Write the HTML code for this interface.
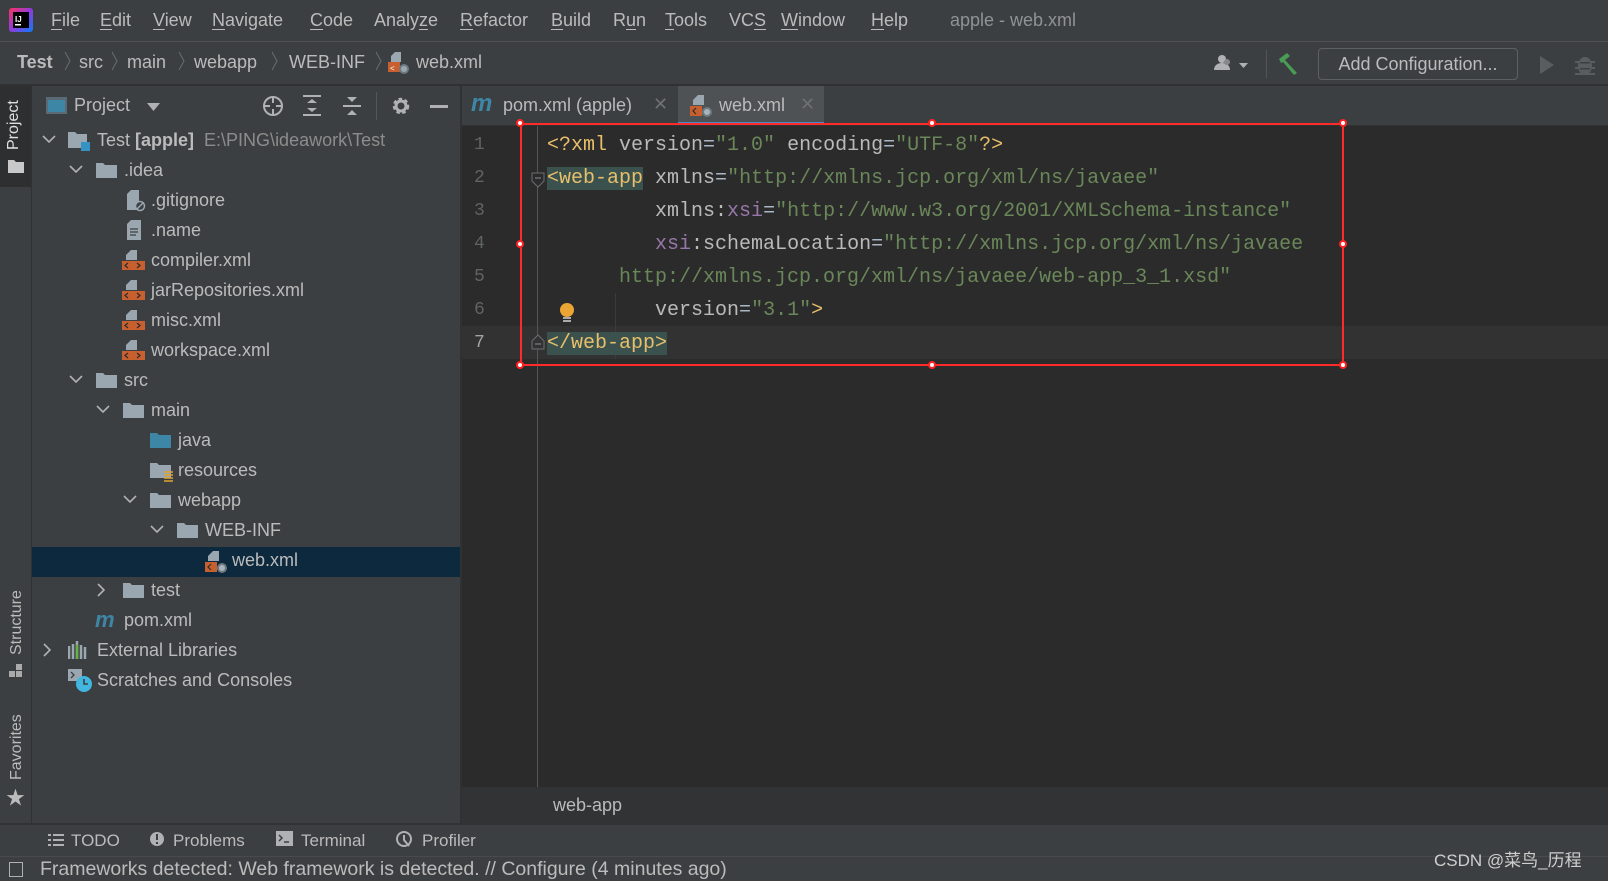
<!DOCTYPE html>
<html><head><meta charset="utf-8"><style>
*{margin:0;padding:0;box-sizing:border-box}
body{width:1608px;height:877px;overflow:hidden;background:#3c3f41;font-family:"Liberation Sans","Noto Sans CJK SC",sans-serif;color:#bbbbbb;position:relative}
.a{position:absolute;white-space:nowrap}
.menu span{position:absolute;top:10px;font-size:18px;color:#bbbbbb}
.u{text-decoration:underline;text-decoration-thickness:1px;text-underline-offset:3px}
.bc{position:absolute;top:52px;font-size:18px;color:#bbbbbb}
.sep{position:absolute;top:50px;width:9px;height:22px}
.row{position:absolute;left:32px;width:428px;height:30px;font-size:18px;line-height:30px}
.row .t{position:absolute;top:0}
.row svg{position:absolute}
.code{position:absolute;left:547px;font-family:"Liberation Mono",monospace;font-size:20px;line-height:33px;white-space:pre;color:#a9b7c6}
.ln{position:absolute;left:474px;width:20px;font-family:"Liberation Mono",monospace;font-size:18px;color:#606366;line-height:33px}
.tg{color:#e8bf6a}.at{color:#bababa}.vl{color:#6a8759}.ns{color:#9876aa}
.hl{background:#3b514d}
</style></head><body>
<div class="a" style="left:0;top:0;width:1608px;height:42px;background:#3c3f41;border-bottom:1px solid #515151"></div>
<svg class="a" style="left:8px;top:7px" width="26" height="26" viewBox="0 0 26 26"><defs><linearGradient id="g" x1="0" y1="0" x2="1" y2="1"><stop offset="0" stop-color="#fe315d"/><stop offset=".5" stop-color="#8f3bdc"/><stop offset="1" stop-color="#087cfa"/></linearGradient></defs><rect x="1" y="1" width="24" height="24" rx="3" fill="url(#g)"/><rect x="5" y="5" width="16" height="16" fill="#000"/><text x="7" y="15" font-size="8" fill="#fff" font-family="Liberation Sans" font-weight="bold">IJ</text><rect x="7" y="17" width="6" height="1.5" fill="#fff"/></svg>
<div class="menu">
<span style="left:51px"><span class="u" style="position:static">F</span>ile</span>
<span style="left:100px"><span class="u" style="position:static">E</span>dit</span>
<span style="left:153px"><span class="u" style="position:static">V</span>iew</span>
<span style="left:212px"><span class="u" style="position:static">N</span>avigate</span>
<span style="left:310px"><span class="u" style="position:static">C</span>ode</span>
<span style="left:374px">Analy<span class="u" style="position:static">z</span>e</span>
<span style="left:460px"><span class="u" style="position:static">R</span>efactor</span>
<span style="left:551px"><span class="u" style="position:static">B</span>uild</span>
<span style="left:613px">R<span class="u" style="position:static">u</span>n</span>
<span style="left:665px"><span class="u" style="position:static">T</span>ools</span>
<span style="left:729px">VC<span class="u" style="position:static">S</span></span>
<span style="left:781px"><span class="u" style="position:static">W</span>indow</span>
<span style="left:871px"><span class="u" style="position:static">H</span>elp</span>
<span style="left:950px;color:#8f9296">apple - web.xml</span>
</div>
<div class="a" style="left:0;top:84px;width:1608px;height:2px;background:#2f3133"></div>
<span class="bc" style="left:17px;font-weight:bold">Test</span>
<span class="bc" style="left:79px">src</span>
<span class="bc" style="left:127px">main</span>
<span class="bc" style="left:194px">webapp</span>
<span class="bc" style="left:289px">WEB-INF</span>
<span class="bc" style="left:416px">web.xml</span>
<svg class="sep" style="left:63px"><path d="M2 2 L7 11 L2 20" stroke="#6a6d70" fill="none"/></svg>
<svg class="sep" style="left:110px"><path d="M2 2 L7 11 L2 20" stroke="#6a6d70" fill="none"/></svg>
<svg class="sep" style="left:177px"><path d="M2 2 L7 11 L2 20" stroke="#6a6d70" fill="none"/></svg>
<svg class="sep" style="left:270px"><path d="M2 2 L7 11 L2 20" stroke="#6a6d70" fill="none"/></svg>
<svg class="sep" style="left:374px"><path d="M2 2 L7 11 L2 20" stroke="#6a6d70" fill="none"/></svg>
<svg class="a" style="left:387px;top:51px" width="24" height="24"><path d="M8 1h6v10H4V5z" fill="#9aa7b0"/><rect x="1" y="11" width="12" height="10" fill="#c75f2e"/><text x="3" y="20" font-size="8" fill="#fff">&lt;</text><circle cx="17" cy="18" r="5" fill="#6e7a82"/><circle cx="17" cy="18" r="3" fill="#9aa7b0"/></svg>
<svg class="a" style="left:1213px;top:53px" width="40" height="22"><circle cx="9" cy="6" r="4" fill="#afb1b3"/><path d="M1 17c0-5 4-7 8-7s8 2 8 7z" fill="#afb1b3"/><circle cx="14" cy="9" r="3" fill="#888"/><path d="M26 10h9l-4.5 5z" fill="#afb1b3"/></svg>
<div class="a" style="left:1266px;top:50px;width:1px;height:28px;background:#555"></div>
<svg class="a" style="left:1276px;top:51px" width="26" height="26"><path d="M3 8 L11 2 L14 5 L9 9 L21 22 L18 24 L7 11 L5 12 z" fill="#499c54"/></svg>
<div class="a" style="left:1318px;top:48px;width:200px;height:32px;border:1px solid #5e6060;border-radius:4px;font-size:18px;line-height:30px;text-align:center;color:#bbbbbb">Add Configuration...</div>
<svg class="a" style="left:1538px;top:54px" width="18" height="22"><path d="M2 2 L16 11 L2 20z" fill="#5a5d5f"/></svg>
<svg class="a" style="left:1574px;top:52px" width="22" height="26"><ellipse cx="11" cy="14" rx="7" ry="9" fill="#5a5d5f"/><path d="M1 10h20M1 16h20M1 22h20" stroke="#5a5d5f" stroke-width="2"/><rect x="6" y="10" width="10" height="1.5" fill="#3c3f41"/><rect x="6" y="16" width="10" height="1.5" fill="#3c3f41"/></svg>
<div class="a" style="left:0;top:86px;width:32px;height:737px;background:#3c3f41;border-right:1px solid #2f3133"></div>
<div class="a" style="left:0;top:86px;width:31px;height:101px;background:#2d2f30"></div>
<div class="a" style="left:5px;top:150px;transform:rotate(-90deg);transform-origin:0 0;font-size:16px;color:#e0e0e0">Project</div>
<svg class="a" style="left:8px;top:160px" width="18" height="14"><path d="M0 0h6l2 2h8v11H0z" fill="#c8c8c8"/></svg>
<div class="a" style="left:8px;top:655px;transform:rotate(-90deg);transform-origin:0 0;font-size:16px;color:#bbbbbb">Structure</div>
<svg class="a" style="left:9px;top:664px" width="14" height="14"><rect x="0" y="7" width="6" height="6" fill="#aaa"/><rect x="7" y="7" width="6" height="6" fill="#aaa"/><rect x="7" y="0" width="6" height="6" fill="#aaa"/></svg>
<div class="a" style="left:8px;top:780px;transform:rotate(-90deg);transform-origin:0 0;font-size:16px;color:#bbbbbb">Favorites</div>
<div class="a" style="left:6px;top:783px;font-size:19px;color:#bbbbbb">★</div>
<svg class="a" style="left:46px;top:96px" width="22" height="20"><rect x="0" y="1" width="21" height="17" fill="#5a6a74"/><rect x="2" y="4" width="17" height="12" fill="#3d86a6"/></svg>
<span class="a" style="left:74px;top:95px;font-size:18px;color:#bbbbbb">Project</span>
<svg class="a" style="left:147px;top:103px" width="14" height="10"><path d="M0 0h13l-6.5 8z" fill="#afb1b3"/></svg>
<svg class="a" style="left:262px;top:95px" width="22" height="22"><circle cx="11" cy="11" r="9" stroke="#afb1b3" stroke-width="2" fill="none"/><path d="M11 2v6M11 14v6M2 11h6M14 11h6" stroke="#afb1b3" stroke-width="2"/></svg>
<svg class="a" style="left:302px;top:94px" width="20" height="24"><path d="M1 2h18M1 21h18" stroke="#afb1b3" stroke-width="2"/><path d="M5 9l5-4 5 4zM5 14l5 4 5-4z" fill="#afb1b3"/></svg>
<svg class="a" style="left:342px;top:94px" width="20" height="24"><path d="M1 12h18" stroke="#afb1b3" stroke-width="2"/><path d="M5 3l5 5 5-5zM5 21l5-5 5 5z" fill="#afb1b3"/></svg>
<div class="a" style="left:376px;top:92px;width:1px;height:28px;background:#555"></div>
<svg class="a" style="left:391px;top:96px" width="20" height="20" viewBox="0 0 20 20"><circle cx="10" cy="10" r="6" fill="none" stroke="#afb1b3" stroke-width="4.5" stroke-dasharray="3 2.2"/><circle cx="10" cy="10" r="5" fill="none" stroke="#afb1b3" stroke-width="3"/></svg>
<div class="a" style="left:430px;top:105px;width:18px;height:3px;background:#afb1b3"></div>
<div class="row" style="top:547px;background:#0d293e"></div>
<div class="row" style="top:125px"><svg style="left:10px;top:9px" width="14" height="12"><path d="M1 2l6 6 6-6" stroke="#afb1b3" stroke-width="1.6" fill="none"/></svg><svg style="left:36px;top:6px" width="24" height="22"><path d="M0 1h7l2 2h10v14H0z" fill="#9aa7b0"/><rect x="13" y="11" width="9" height="9" fill="#3592c4"/></svg><span class="t" style="left:65px">Test <b>[apple]</b>&nbsp;&nbsp;<span style="color:#8c8c8c">E:\PING\ideawork\Test</span></span></div>
<div class="row" style="top:155px"><svg style="left:37px;top:9px" width="14" height="12"><path d="M1 2l6 6 6-6" stroke="#afb1b3" stroke-width="1.6" fill="none"/></svg><svg style="left:64px;top:7px" width="22" height="17"><path d="M0 1h7l2 2h12v13H0z" fill="#9aa7b0"/></svg><span class="t" style="left:92px">.idea</span></div>
<div class="row" style="top:185px"><svg style="left:93px;top:5px" width="22" height="22"><path d="M6 0h8v20H2V4z" fill="#9aa7b0"/><circle cx="15" cy="16" r="4.5" fill="#3c3f41" stroke="#9aa7b0" stroke-width="1.5"/><path d="M12 19l6-6" stroke="#9aa7b0" stroke-width="1.5"/></svg><span class="t" style="left:119px">.gitignore</span></div>
<div class="row" style="top:215px"><svg style="left:93px;top:5px" width="22" height="22"><path d="M6 0h10v20H2V4z" fill="#9aa7b0"/><path d="M5 9h8M5 12h8M5 15h6" stroke="#3c3f41" stroke-width="1.2"/></svg><span class="t" style="left:119px">.name</span></div>
<div class="row" style="top:245px"><svg style="left:90px;top:5px" width="24" height="22"><path d="M9 0h6v10H4V5z" fill="#9aa7b0"/><rect x="0" y="11" width="23" height="9" fill="#c75f2e"/><path d="M6 13l-3 2.5 3 2.5M15 13l3 2.5-3 2.5" stroke="#2b2b2b" stroke-width="1.2" fill="none"/></svg><span class="t" style="left:119px">compiler.xml</span></div>
<div class="row" style="top:275px"><svg style="left:90px;top:5px" width="24" height="22"><path d="M9 0h6v10H4V5z" fill="#9aa7b0"/><rect x="0" y="11" width="23" height="9" fill="#c75f2e"/><path d="M6 13l-3 2.5 3 2.5M15 13l3 2.5-3 2.5" stroke="#2b2b2b" stroke-width="1.2" fill="none"/></svg><span class="t" style="left:119px">jarRepositories.xml</span></div>
<div class="row" style="top:305px"><svg style="left:90px;top:5px" width="24" height="22"><path d="M9 0h6v10H4V5z" fill="#9aa7b0"/><rect x="0" y="11" width="23" height="9" fill="#c75f2e"/><path d="M6 13l-3 2.5 3 2.5M15 13l3 2.5-3 2.5" stroke="#2b2b2b" stroke-width="1.2" fill="none"/></svg><span class="t" style="left:119px">misc.xml</span></div>
<div class="row" style="top:335px"><svg style="left:90px;top:5px" width="24" height="22"><path d="M9 0h6v10H4V5z" fill="#9aa7b0"/><rect x="0" y="11" width="23" height="9" fill="#c75f2e"/><path d="M6 13l-3 2.5 3 2.5M15 13l3 2.5-3 2.5" stroke="#2b2b2b" stroke-width="1.2" fill="none"/></svg><span class="t" style="left:119px">workspace.xml</span></div>
<div class="row" style="top:365px"><svg style="left:37px;top:9px" width="14" height="12"><path d="M1 2l6 6 6-6" stroke="#afb1b3" stroke-width="1.6" fill="none"/></svg><svg style="left:64px;top:7px" width="22" height="17"><path d="M0 1h7l2 2h12v13H0z" fill="#9aa7b0"/></svg><span class="t" style="left:92px">src</span></div>
<div class="row" style="top:395px"><svg style="left:64px;top:9px" width="14" height="12"><path d="M1 2l6 6 6-6" stroke="#afb1b3" stroke-width="1.6" fill="none"/></svg><svg style="left:91px;top:7px" width="22" height="17"><path d="M0 1h7l2 2h12v13H0z" fill="#9aa7b0"/></svg><span class="t" style="left:119px">main</span></div>
<div class="row" style="top:425px"><svg style="left:118px;top:7px" width="22" height="17"><path d="M0 1h7l2 2h12v13H0z" fill="#3d86a6"/></svg><span class="t" style="left:146px">java</span></div>
<div class="row" style="top:455px"><svg style="left:118px;top:7px" width="24" height="20"><path d="M0 1h7l2 2h12v13H0z" fill="#9aa7b0"/><path d="M14 10h9M14 13h9M14 16h9M14 19h9" stroke="#e0a330" stroke-width="1.6"/></svg><span class="t" style="left:146px">resources</span></div>
<div class="row" style="top:485px"><svg style="left:91px;top:9px" width="14" height="12"><path d="M1 2l6 6 6-6" stroke="#afb1b3" stroke-width="1.6" fill="none"/></svg><svg style="left:118px;top:7px" width="22" height="17"><path d="M0 1h7l2 2h12v13H0z" fill="#9aa7b0"/></svg><span class="t" style="left:146px">webapp</span></div>
<div class="row" style="top:515px"><svg style="left:118px;top:9px" width="14" height="12"><path d="M1 2l6 6 6-6" stroke="#afb1b3" stroke-width="1.6" fill="none"/></svg><svg style="left:145px;top:7px" width="22" height="17"><path d="M0 1h7l2 2h12v13H0z" fill="#9aa7b0"/></svg><span class="t" style="left:173px">WEB-INF</span></div>
<div class="row" style="top:545px"><svg style="left:172px;top:5px" width="26" height="24"><path d="M9 1h6v10H4V6z" fill="#9aa7b0"/><rect x="1" y="12" width="12" height="10" fill="#c75f2e"/><path d="M7 14l-3 3 3 3" stroke="#2b2b2b" stroke-width="1.2" fill="none"/><circle cx="18" cy="18" r="5" fill="#6e7a82"/><circle cx="18" cy="18" r="3" fill="#a9b4bb"/></svg><span class="t" style="left:200px">web.xml</span></div>
<div class="row" style="top:575px"><svg style="left:64px;top:8px" width="12" height="14"><path d="M2 1l6 6-6 6" stroke="#afb1b3" stroke-width="1.6" fill="none"/></svg><svg style="left:91px;top:7px" width="22" height="17"><path d="M0 1h7l2 2h12v13H0z" fill="#9aa7b0"/></svg><span class="t" style="left:119px">test</span></div>
<div class="row" style="top:605px"><span class="t" style="left:63px;color:#3d86a6;font-weight:bold;font-style:italic;font-size:22px">m</span><span class="t" style="left:92px">pom.xml</span></div>
<div class="row" style="top:635px"><svg style="left:10px;top:8px" width="12" height="14"><path d="M2 1l6 6-6 6" stroke="#afb1b3" stroke-width="1.6" fill="none"/></svg><svg style="left:36px;top:6px" width="22" height="18"><path d="M1 5v13M5 3v15M9 0v18M13 4v14M17 6v12" stroke="#9aa7b0" stroke-width="2.5"/><path d="M9 4v14" stroke="#62b543" stroke-width="2.5"/></svg><span class="t" style="left:65px">External Libraries</span></div>
<div class="row" style="top:665px"><svg style="left:36px;top:4px" width="26" height="24"><rect x="0" y="0" width="14" height="12" fill="#9aa7b0"/><path d="M3 3l3 3-3 3" stroke="#3c3f41" stroke-width="1.3" fill="none"/><circle cx="16" cy="15" r="8" fill="#40b6e0"/><path d="M16 10v5h4" stroke="#3c3f41" stroke-width="1.6" fill="none"/></svg><span class="t" style="left:65px">Scratches and Consoles</span></div>
<div class="a" style="left:462px;top:86px;width:1146px;height:40px;background:#3c3f41"></div>
<div class="a" style="left:462px;top:125px;width:1146px;height:1px;background:#323232"></div>
<div class="a" style="left:678px;top:86px;width:146px;height:39px;background:#4e5254"></div>
<div class="a" style="left:678px;top:122px;width:146px;height:3px;background:#4a88c7"></div>
<span class="a" style="left:471px;top:90px;color:#3d86a6;font-weight:bold;font-style:italic;font-size:24px">m</span>
<span class="a" style="left:503px;top:95px;font-size:18px">pom.xml (apple)</span>
<span class="a" style="left:653px;top:94px;font-size:18px;color:#6e7072">✕</span>
<svg class="a" style="left:689px;top:94px" width="26" height="24"><path d="M9 1h6v10H4V6z" fill="#9aa7b0"/><rect x="1" y="12" width="12" height="10" fill="#c75f2e"/><path d="M7 14l-3 3 3 3" stroke="#2b2b2b" stroke-width="1.2" fill="none"/><circle cx="18" cy="18" r="5" fill="#6e7a82"/><circle cx="18" cy="18" r="3" fill="#a9b4bb"/></svg>
<span class="a" style="left:719px;top:95px;font-size:18px">web.xml</span>
<span class="a" style="left:800px;top:94px;font-size:18px;color:#6e7072">✕</span>
<div class="a" style="left:462px;top:126px;width:1146px;height:661px;background:#2b2b2b"></div>
<div class="a" style="left:462px;top:326px;width:1146px;height:33px;background:#323232"></div>
<div class="a" style="left:537px;top:126px;width:1px;height:661px;background:#555555"></div>
<div class="a" style="left:615px;top:293px;width:1px;height:66px;background:#3b3b3b"></div>
<div class="ln" style="top:129px">1<br>2<br>3<br>4<br>5<br>6<br><span style="color:#a4a3a3">7</span></div>
<svg class="a" style="left:531px;top:172px" width="14" height="16"><path d="M1 1h12v8l-6 6-6-6z" fill="#2b2b2b" stroke="#6a6d70"/><path d="M4 6h6" stroke="#8a8d90"/></svg>
<svg class="a" style="left:531px;top:334px" width="14" height="16"><path d="M1 15h12V7L7 1 1 7z" fill="#323232" stroke="#6a6d70"/><path d="M4 10h6" stroke="#8a8d90"/></svg>
<svg class="a" style="left:558px;top:302px" width="18" height="22"><circle cx="9" cy="8" r="7" fill="#eaa534"/><rect x="5" y="15" width="8" height="2" fill="#aaa"/><rect x="5" y="18" width="8" height="2" fill="#aaa"/></svg>
<div class="code" style="top:129px"><span class="tg">&lt;?xml </span><span class="at">version</span>=<span class="vl">"1.0"</span> <span class="at">encoding</span>=<span class="vl">"UTF-8"</span><span class="tg">?&gt;</span>
<span class="tg hl">&lt;web-app</span> <span class="at">xmlns</span>=<span class="vl">"http://xmlns.jcp.org/xml/ns/javaee"</span>
         <span class="at">xmlns:</span><span class="ns">xsi</span>=<span class="vl">"http://www.w3.org/2001/XMLSchema-instance"</span>
         <span class="ns">xsi</span><span class="at">:schemaLocation</span>=<span class="vl">"http://xmlns.jcp.org/xml/ns/javaee</span>
<span class="vl">      http://xmlns.jcp.org/xml/ns/javaee/web-app_3_1.xsd"</span>
         <span class="at">version</span>=<span class="vl">"3.1"</span><span class="tg">&gt;</span>
<span class="tg hl">&lt;/web-app&gt;</span></div>
<div class="a" style="left:520px;top:123px;width:824px;height:243px;border:2px solid #ff2a2a"></div>
<div class="a" style="left:516px;top:119px;width:8px;height:8px;border-radius:50%;background:#fff;border:2px solid #f22"></div>
<div class="a" style="left:928px;top:119px;width:8px;height:8px;border-radius:50%;background:#fff;border:2px solid #f22"></div>
<div class="a" style="left:1339px;top:119px;width:8px;height:8px;border-radius:50%;background:#fff;border:2px solid #f22"></div>
<div class="a" style="left:516px;top:240px;width:8px;height:8px;border-radius:50%;background:#fff;border:2px solid #f22"></div>
<div class="a" style="left:1339px;top:240px;width:8px;height:8px;border-radius:50%;background:#fff;border:2px solid #f22"></div>
<div class="a" style="left:516px;top:361px;width:8px;height:8px;border-radius:50%;background:#fff;border:2px solid #f22"></div>
<div class="a" style="left:928px;top:361px;width:8px;height:8px;border-radius:50%;background:#fff;border:2px solid #f22"></div>
<div class="a" style="left:1339px;top:361px;width:8px;height:8px;border-radius:50%;background:#fff;border:2px solid #f22"></div>
<div class="a" style="left:462px;top:787px;width:1146px;height:36px;background:#313335;border-top:1px solid #323232"></div>
<span class="a" style="left:553px;top:795px;font-size:18px">web-app</span>
<div class="a" style="left:460px;top:86px;width:2px;height:737px;background:#2f3133"></div>
<div class="a" style="left:0;top:823px;width:1608px;height:33px;background:#3c3f41;border-top:2px solid #323232"></div>
<svg class="a" style="left:48px;top:833px" width="16" height="14"><path d="M0 2h3M0 7h3M0 12h3M5 2h11M5 7h11M5 12h11" stroke="#afb1b3" stroke-width="2"/></svg>
<span class="a" style="left:71px;top:831px;font-size:17px">TODO</span>
<svg class="a" style="left:149px;top:831px" width="16" height="18"><circle cx="8" cy="8" r="7" fill="#afb1b3"/><path d="M8 3v6M8 11v2" stroke="#3c3f41" stroke-width="2"/></svg>
<span class="a" style="left:173px;top:831px;font-size:17px">Problems</span>
<svg class="a" style="left:276px;top:831px" width="18" height="16"><rect x="0" y="0" width="17" height="15" fill="#afb1b3"/><path d="M3 4l3 3-3 3M8 11h5" stroke="#3c3f41" stroke-width="1.5" fill="none"/></svg>
<span class="a" style="left:301px;top:831px;font-size:17px">Terminal</span>
<svg class="a" style="left:395px;top:829px" width="20" height="20"><circle cx="9" cy="10" r="7" fill="none" stroke="#afb1b3" stroke-width="2"/><path d="M9 6v5l5 6" stroke="#afb1b3" stroke-width="2" fill="none"/></svg>
<span class="a" style="left:422px;top:831px;font-size:17px">Profiler</span>
<div class="a" style="left:0;top:856px;width:1608px;height:21px;background:#3c3f41;border-top:1px solid #4a4a4a"></div>
<div class="a" style="left:9px;top:862px;width:14px;height:15px;border:1px solid #afb1b3"></div>
<span class="a" style="left:40px;top:858px;font-size:19.5px">Frameworks detected: Web framework is detected. // Configure (4 minutes ago)</span>
<span class="a" style="left:1434px;top:846px;font-size:17px;color:#cfcfcf">CSDN @菜鸟_历程</span>
</body></html>
